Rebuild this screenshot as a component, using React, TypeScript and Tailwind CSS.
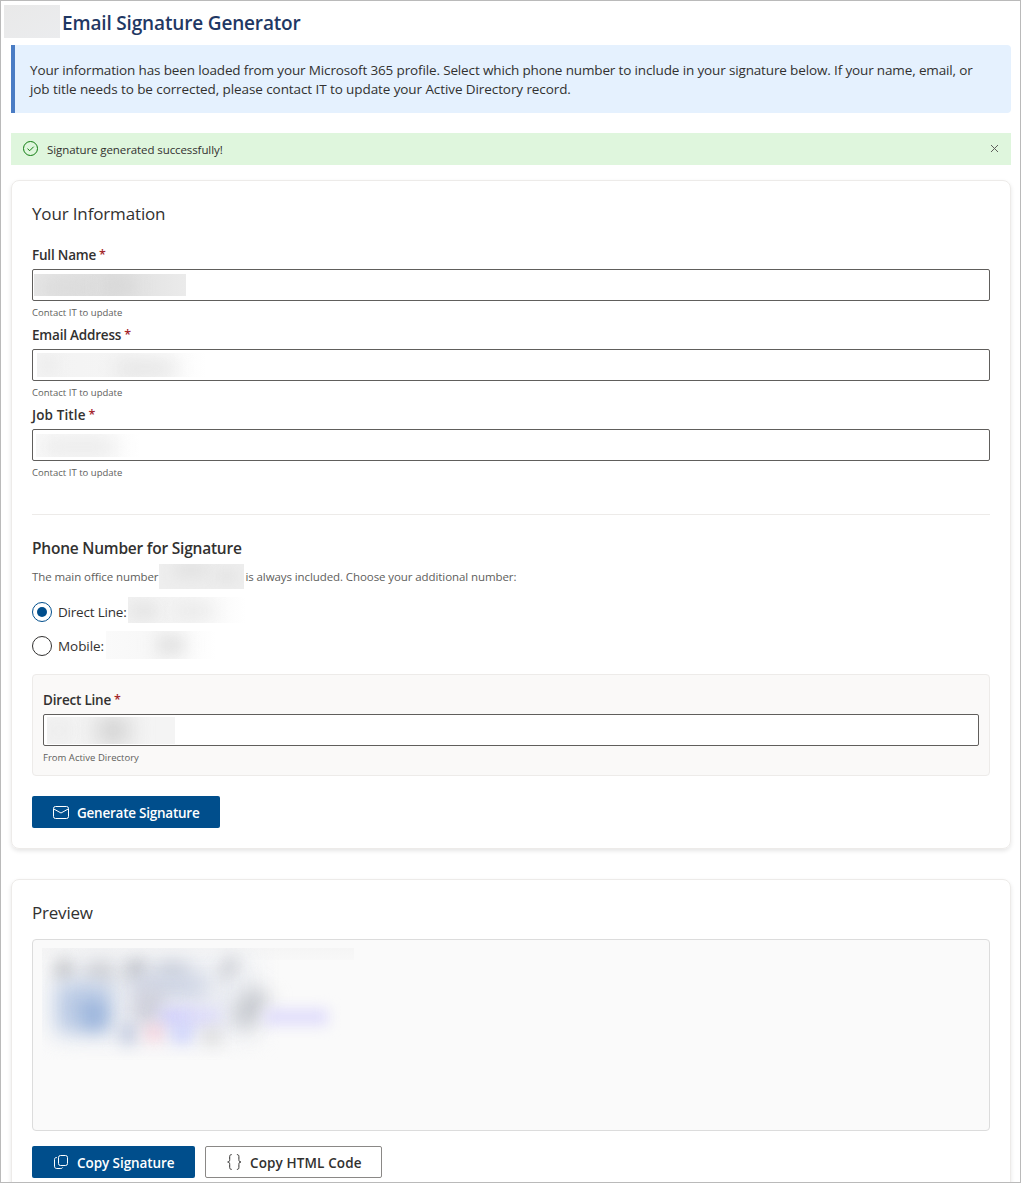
import { ReactNode, useState } from "react";

type FieldProps = {
  id: string;
  label: string;
  description: string;
  labelClass: string;
  children: ReactNode;
};

function Field({ id, label, description, labelClass, children }: FieldProps) {
  return (
    <div className="h-20">
      <label
        htmlFor={id}
        className="flex h-[29px] items-center gap-[3px] pt-[2px] whitespace-nowrap text-[13.5px] font-semibold text-[#323130]"
      >
        <span className={labelClass}>{label}</span>
        <span className="text-[12.5px] text-[#a4262c]">*</span>
      </label>
      <div
        id={id}
        className="flex h-8 items-center rounded-[2px] border border-[#605e5c] bg-white"
      >
        {children}
      </div>
      <p className="mt-[4px] h-[15px] whitespace-nowrap text-[9.5px] leading-[15px] tracking-[0.02px] text-[#605e5c]">
        {description}
      </p>
    </div>
  );
}

function MailIcon() {
  return (
    <svg width="16" height="16" viewBox="0 0 16 16" fill="none" stroke="currentColor">
      <rect x="0.5" y="2.5" width="15" height="12" rx="2" />
      <path d="M0.8 5 L8 9 L15.2 5" />
    </svg>
  );
}

function CopyIcon() {
  return (
    <svg width="16" height="16" viewBox="0 0 16 16" fill="none" stroke="currentColor">
      <rect x="5.5" y="1.5" width="9" height="10" rx="2" />
      <path d="M4 3.6 H3.2 C2.1 3.6 1.5 4.4 1.5 5.4 V12.2 C1.5 13.7 2.4 14.5 3.8 14.5 H7.8 C8.9 14.5 9.5 14 9.6 13.4" />
    </svg>
  );
}

function BracesIcon() {
  return (
    <svg width="16" height="16" viewBox="0 0 16 16" fill="none" stroke="currentColor">
      <path d="M4.7 0.6 C3.2 0.6 2.7 1.3 2.7 2.6 V5.6 C2.7 7.2 2.1 8 0.7 8 C2.1 8 2.7 8.8 2.7 10.4 V13.4 C2.7 14.7 3.2 15.4 4.7 15.4" />
      <path d="M9.9 0.6 C11.4 0.6 11.9 1.3 11.9 2.6 V5.6 C11.9 7.2 12.5 8 13.9 8 C12.5 8 11.9 8.8 11.9 10.4 V13.4 C11.9 14.7 11.4 15.4 9.9 15.4" />
    </svg>
  );
}

type RadioProps = {
  checked: boolean;
  onSelect: () => void;
  children: ReactNode;
};

function Radio({ checked, onSelect, children }: RadioProps) {
  return (
    <button
      type="button"
      role="radio"
      aria-checked={checked}
      onClick={onSelect}
      className="flex h-[34px] items-center text-[13.5px] text-[#323130]"
    >
      <span
        className={
          checked
            ? "mr-1.5 flex size-5 items-center justify-center rounded-full border border-[#004e8c]"
            : "mr-1.5 flex size-5 items-center justify-center rounded-full border border-[#323130]"
        }
      >
        {checked && <span className="size-2.5 rounded-full bg-[#004e8c]" />}
      </span>
      {children}
    </button>
  );
}

export default function App() {
  const [phone, setPhone] = useState("direct");
  const [showMessage, setShowMessage] = useState(true);

  return (
    <div className="h-[1183px] w-[1021px] overflow-hidden border border-[#bababa] bg-white font-['Open_Sans','Noto_Sans',sans-serif] text-[#323130]">
      <header className="flex h-11 items-start pt-1 pl-[3px]">
        <div className="h-[33px] w-14 bg-linear-to-br from-[#e9e9e9] to-[#ebecee]" />
        <h1 className="ml-[2px] h-9 whitespace-nowrap text-[19px] leading-9 font-semibold tracking-[-0.16px] text-[#1f3864]">
          Email Signature Generator
        </h1>
      </header>

      <main className="px-2.5 pr-[9px]">
        <div className="h-[68px] w-[1000px] rounded-r border-l-4 border-[#4a7cc4] bg-[#e5f1fe] pt-4 pl-[15px] text-[13.5px] leading-[19px] whitespace-nowrap">
          <p className="tracking-[-0.142px]">
            Your information has been loaded from your Microsoft 365 profile.
            Select which phone number to include in your signature below. If
            your name, email, or
          </p>
          <p className="tracking-[-0.09px]">
            job title needs to be corrected, please contact IT to update your
            Active Directory record.
          </p>
        </div>

        <div className="mt-5 h-8">
          {showMessage && (
            <div className="flex h-8 w-[1000px] items-center bg-[#dff6dd] pr-[11px] pl-3">
              <svg width="16" height="16" viewBox="0 0 16 16" fill="none" stroke="#107c10">
                <circle cx="7.5" cy="7.5" r="7" />
                <path d="M4.5 7.7 L6.7 9.7 L10.7 5.7" />
              </svg>
              <span className="ml-2 pt-0.5 text-[11.5px] tracking-[-0.09px] whitespace-nowrap">
                Signature generated successfully!
              </span>
              <button
                type="button"
                aria-label="Close"
                className="-mt-px ml-auto text-[#605e5c]"
                onClick={() => setShowMessage(false)}
              >
                <svg width="11" height="11" viewBox="0 0 11 11" stroke="currentColor">
                  <path d="M2 2 L9 9 M9 2 L2 9" />
                </svg>
              </button>
            </div>
          )}
        </div>

        <section className="mt-[15px] h-[669px] w-[1000px] rounded-lg border border-[#edebe9] px-5 pt-[19px] shadow-[0_2px_4px_rgba(0,0,0,0.1)]">
          <h2 className="h-7 text-[17px] leading-[27px] tracking-[-0.15px] whitespace-nowrap">
            Your Information
          </h2>

          <div className="mt-3">
            <Field
              id="fullName"
              label="Full Name"
              description="Contact IT to update"
              labelClass="tracking-[-0.2px]"
            >
              <div className="relative ml-px h-[22px] w-[152px] overflow-hidden bg-linear-to-r from-[#e6e6e6] via-[#dedede] to-[#ebebeb]">
                <div className="absolute top-2 left-2 h-3 w-12 bg-[#d8d8d8] blur-[9px]" />
                <div className="absolute top-1 left-[72px] h-4 w-7 bg-[#d6d6d6] blur-[9px]" />
              </div>
            </Field>
            <Field
              id="email"
              label="Email Address"
              description="Contact IT to update"
              labelClass="tracking-[-0.2px]"
            >
              <div className="relative ml-1 h-6 w-[170px] overflow-hidden bg-linear-to-r from-[#f3f3f3] via-[#f5f5f5] to-white">
                <div className="absolute top-1 left-1 h-4 w-4 bg-[#ececec] blur-[7px]" />
                <div className="absolute top-2.5 left-[80px] h-3 w-[58px] bg-[#dcdcdc] blur-[10px]" />
              </div>
            </Field>
            <Field
              id="jobTitle"
              label="Job Title"
              description="Contact IT to update"
              labelClass="tracking-[0.12px]"
            >
              <div className="relative ml-[3px] h-[23px] w-[104px] overflow-hidden bg-linear-to-r from-[#f9f9f9] via-[#f7f7f7] to-white">
                <div className="absolute top-1.5 left-2 h-3.5 w-[70px] bg-[#e9e9e9] blur-[9px]" />
              </div>
            </Field>
          </div>

          <div className="mt-[34px] border-t border-[#edebe9] pt-[21px]">
            <h3 className="h-6 text-[15.5px] leading-6 font-semibold tracking-[-0.22px] whitespace-nowrap">
              Phone Number for Signature
            </h3>
            <p className="mt-[3px] flex h-[26px] items-center text-[11.5px] tracking-[-0.085px] whitespace-nowrap text-[#605e5c]">
              <span className="pt-0.5">The main office number</span>
              <span className="relative ml-px h-[25px] w-[85px] overflow-hidden bg-[#eeeeee]">
                <span className="absolute top-0 left-4 h-3 w-8 bg-[#dedede] blur-[8px]" />
                <span className="absolute top-1.5 left-[58px] h-3 w-5 bg-[#e2e2e2] blur-[7px]" />
              </span>
              <span className="ml-px pt-0.5">
                is always included. Choose your additional number:
              </span>
            </p>

            <div role="radiogroup" className="mt-[6px]">
              <Radio
                checked={phone === "direct"}
                onSelect={() => setPhone("direct")}
              >
                <span className="tracking-[-0.2px]">Direct Line:</span>
                <span className="relative mb-1 ml-px h-[26px] w-[118px] overflow-hidden bg-linear-to-r from-[#f1f1f1] via-[#f5f5f5] to-white">
                  <span className="absolute top-2 left-1 h-3 w-6 bg-[#dedede] blur-[8px]" />
                  <span className="absolute top-2 left-12 h-3 w-9 bg-[#e6e6e6] blur-[9px]" />
                </span>
              </Radio>
              <Radio
                checked={phone === "mobile"}
                onSelect={() => setPhone("mobile")}
              >
                <span className="tracking-[-0.05px]">Mobile:</span>
                <span className="relative mb-[2px] ml-[2px] h-7 w-[110px] overflow-hidden bg-linear-to-r from-[#fafafa] via-[#f7f7f7] to-white">
                  <span className="absolute top-1.5 left-[53px] h-4 w-6 bg-[#d8d8d8] blur-[9px]" />
                </span>
              </Radio>
            </div>

            <div className="mt-[11px] h-[102px] rounded border border-[#edebe9] bg-[#faf9f8] px-2.5 pt-2.5">
              <Field
                id="directLine"
                label="Direct Line"
                description="From Active Directory"
                labelClass="tracking-[-0.2px]"
              >
                <div className="relative ml-[3px] h-[27px] w-32 overflow-hidden bg-[#f4f4f4]">
                  <div className="absolute top-1 left-0 h-5 w-6 bg-[#ebebeb] blur-[9px]" />
                  <div className="absolute top-0 left-[50px] h-[27px] w-8 bg-[#cfcfcf] blur-[11px]" />
                </div>
              </Field>
            </div>

            <button
              type="button"
              className="mt-5 flex h-8 w-[188px] items-center rounded-[2px] bg-[#004e8c] pl-[21px] text-[13.5px] font-semibold whitespace-nowrap text-white"
            >
              <MailIcon />
              <span className="ml-2 pt-[2px] tracking-[-0.24px]">
                Generate Signature
              </span>
            </button>
          </div>
        </section>

        <section className="mt-[30px] h-[340px] w-[1000px] rounded-lg border border-[#edebe9] px-5 pt-[19px] shadow-[0_2px_4px_rgba(0,0,0,0.1)]">
          <h2 className="h-7 text-[17px] leading-[27px] tracking-[-0.2px] whitespace-nowrap">
            Preview
          </h2>

          <div className="mt-3 h-48 rounded border border-[#dcdcdc] bg-[#fafafa] pt-2 pl-[9px]">
            <div className="relative h-[112px] w-[314px] overflow-hidden">
              <div className="absolute top-0 left-0 h-3 w-[312px] bg-linear-to-b from-[#f5f5f5] to-[#f8f8f8]" />
              <div className="absolute top-2 left-3 h-[80px] w-[200px] bg-[#eceef3] blur-[14px]" />
              <div className="absolute top-2.5 left-3 h-6 w-5 -rotate-12 rounded-full bg-[#c9cacd] blur-[8px]" />
              <div className="absolute top-3.5 left-[42px] h-5 w-8 rounded-full bg-[#cdced2] blur-[9px]" />
              <div className="absolute top-2.5 left-[82px] h-6 w-6 -rotate-12 rounded-full bg-[#c5c7cd] blur-[8px]" />
              <div className="absolute top-3.5 left-[112px] h-5 w-9 rounded-full bg-[#c9ced9] blur-[9px]" />
              <div className="absolute top-2 left-[180px] h-6 w-3.5 rotate-[30deg] bg-[#cfd1d6] blur-[8px]" />
              <div className="absolute top-7 left-[92px] h-5 w-[72px] bg-[#ccd3e4] blur-[10px]" />
              <div className="absolute top-9 left-[15px] h-12 w-[54px] bg-[#b9cae5] blur-[10px]" />
              <div className="absolute top-[55px] left-[42px] h-6 w-5 bg-[#94b0da] blur-[9px]" />
              <div className="absolute top-10 left-[92px] h-9 w-7 rotate-12 bg-[#cdced9] blur-[10px]" />
              <div className="absolute top-[40px] left-[196px] h-10 w-6 rotate-[30deg] bg-[#c3c6cc] blur-[10px]" />
              <div className="absolute top-[61px] left-[118px] h-4 w-[34px] bg-[#cfcdfd] blur-[8px]" />
              <div className="absolute top-[61px] left-[146px] h-4 w-[32px] bg-[#dcdafb] blur-[8px]" />
              <div className="absolute top-[61px] left-[222px] h-4 w-[64px] bg-[#dfdcfb] blur-[7px]" />
              <div className="absolute top-[76px] left-[78px] h-5 w-4 bg-[#c0c8de] blur-[8px]" />
              <div className="absolute top-[78px] left-[104px] h-3.5 w-4 bg-[#fbccd8] blur-[8px]" />
              <div className="absolute top-[78px] left-[130px] h-4 w-5 bg-[#c8cefd] blur-[8px]" />
              <div className="absolute top-[80px] left-[162px] h-4 w-4 bg-[#d8d8d8] blur-[8px]" />
            </div>
          </div>

          <div className="mt-[15px] flex gap-2.5 text-[13.5px] font-semibold whitespace-nowrap">
            <button
              type="button"
              className="flex h-8 w-[163px] items-center rounded-[2px] bg-[#004e8c] pl-[21px] text-white"
            >
              <CopyIcon />
              <span className="ml-2 pt-[2px] tracking-[-0.07px]">
                Copy Signature
              </span>
            </button>
            <button
              type="button"
              className="flex h-8 w-[177px] items-center rounded-[2px] border border-[#8a8886] bg-white pl-[21px]"
            >
              <BracesIcon />
              <span className="ml-[7px] pt-[2px] tracking-[0.12px]">
                Copy HTML Code
              </span>
            </button>
          </div>
        </section>
      </main>
    </div>
  );
}
